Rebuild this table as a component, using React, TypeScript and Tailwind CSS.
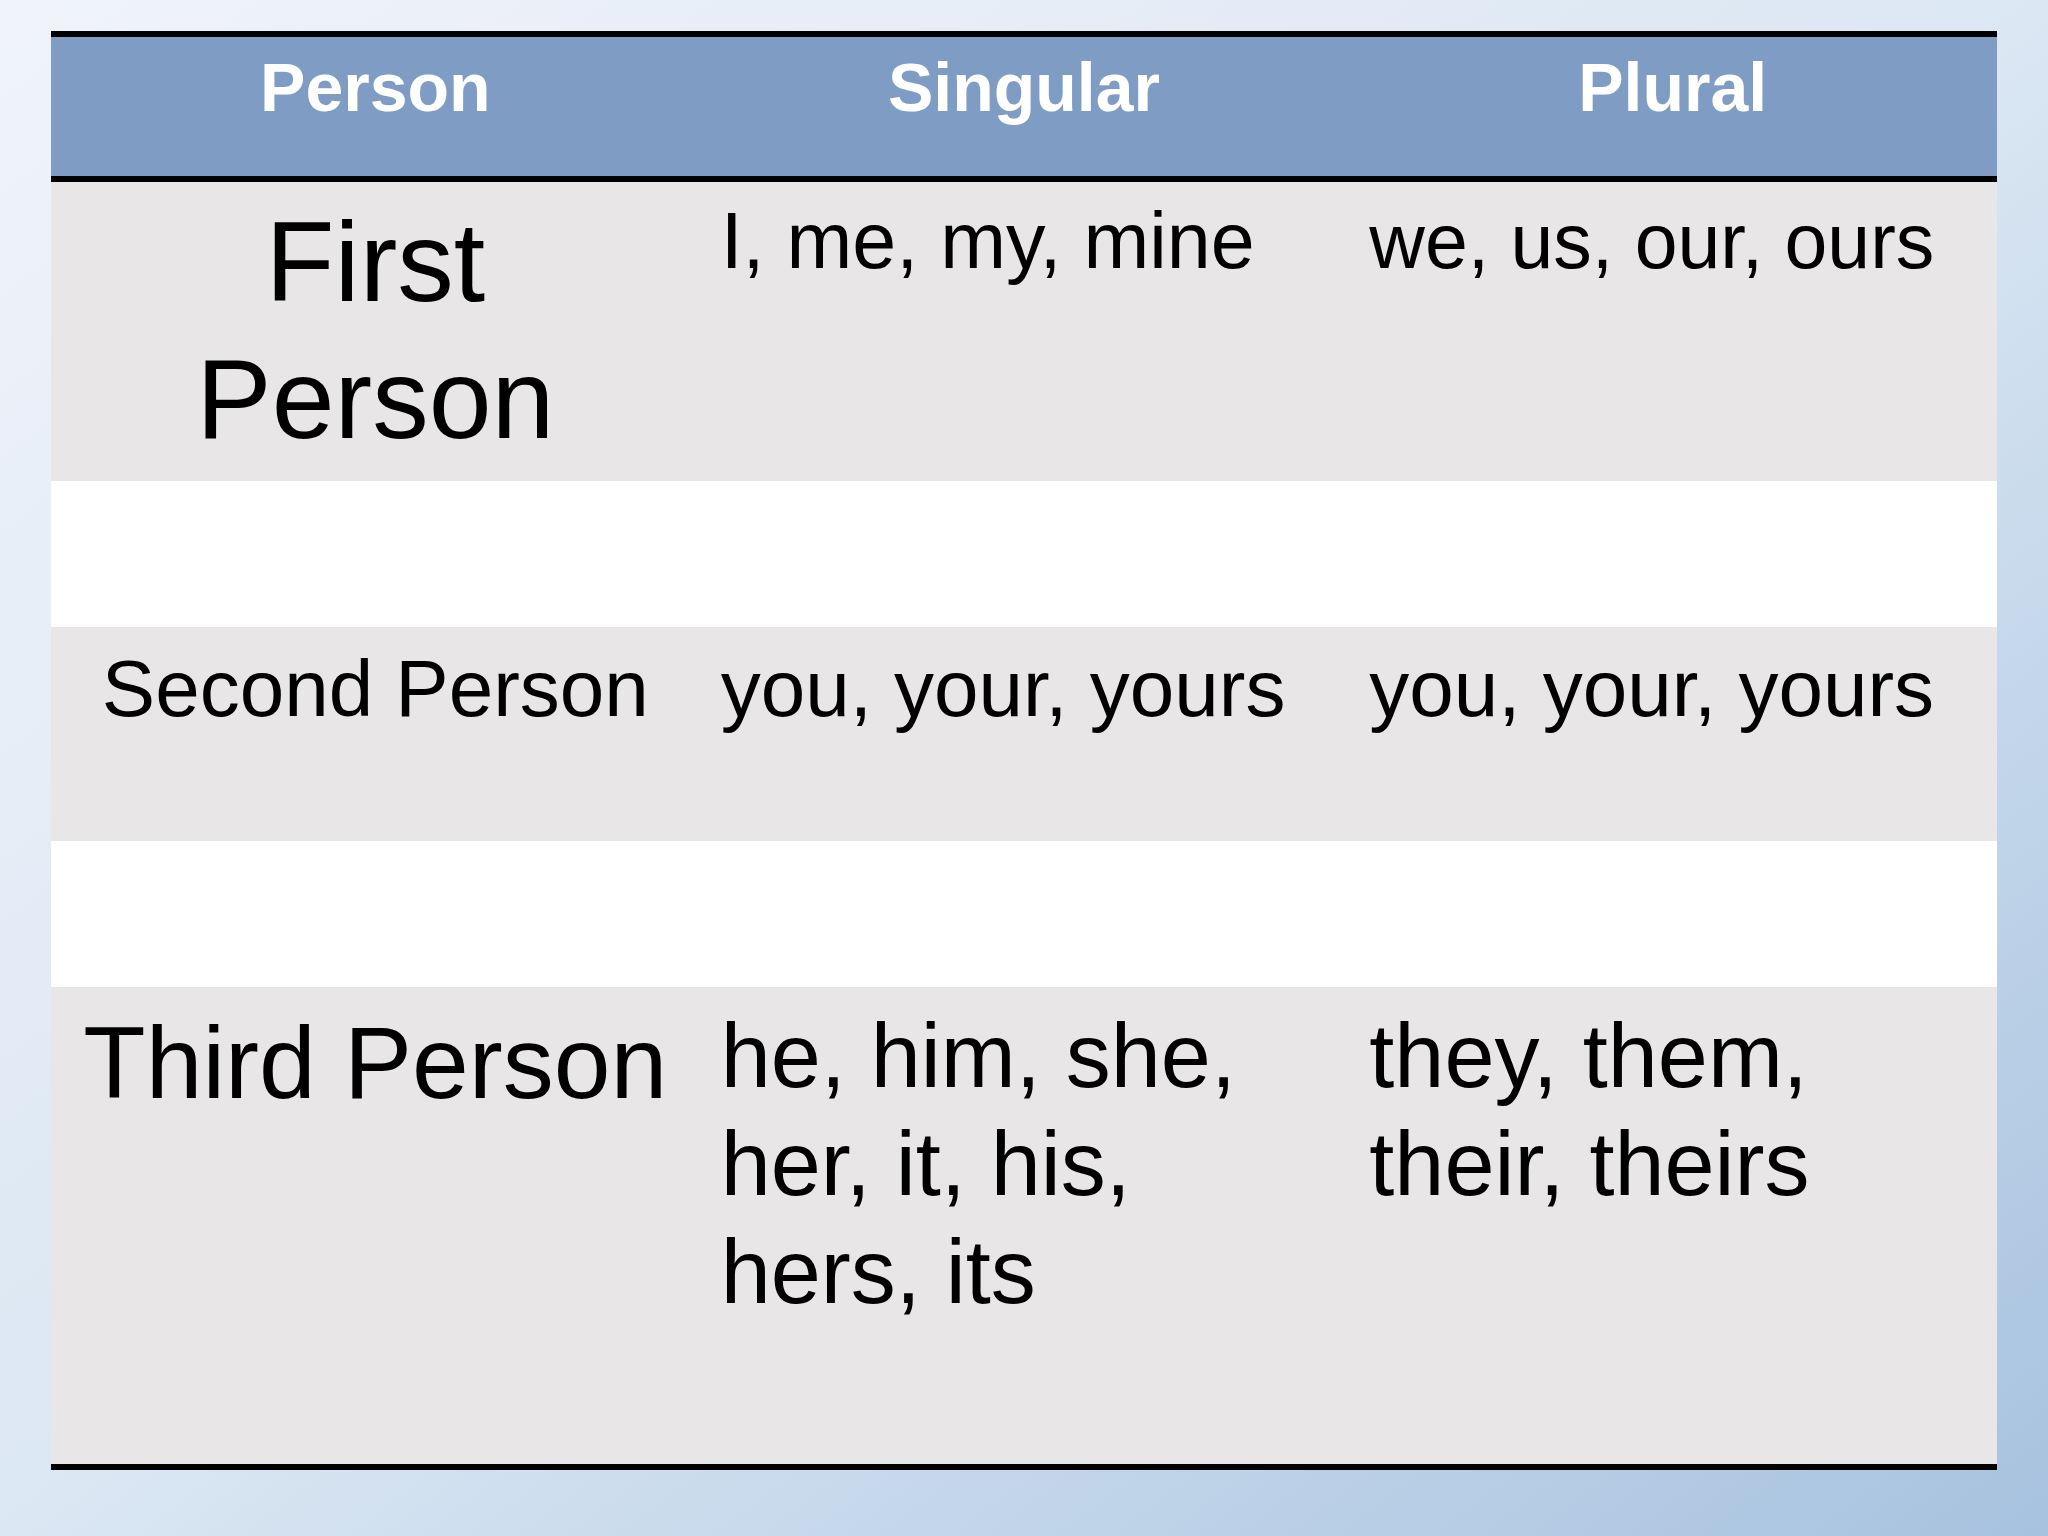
const FONT = "font-['Liberation_Sans',Arial,sans-serif]";

export default function App() {
  return (
    <div className={`w-[2048px] h-[1536px] bg-linear-to-br from-[#f0f3fb] via-[#dbe7f3] to-[#a7c2df] pt-[31px] pl-[51px] ${FONT} text-black`}>
      <div className="w-[1946px] flex flex-col">
        {/* header */}
        <div className="grid grid-cols-3 h-[151px] border-y-[6px] border-black bg-[#7f9dc4] text-white font-bold text-[68px] leading-[78px]">
          <div className="text-center pt-[11px]">Person</div>
          <div className="text-center pt-[11px]">Singular</div>
          <div className="text-center pt-[11px]">Plural</div>
        </div>

        {/* first person */}
        <div className="grid grid-cols-3 h-[299px] bg-[#e8e6e7]">
          <div className="text-center text-[113px] leading-[137px] pt-[12px]">
            First
            <br />
            Person
          </div>
          <div className="text-[79px] leading-[89px] pt-[14px] pl-[21px] pr-[12px]">I, me, my, mine</div>
          <div className="text-[77px] leading-[89px] pt-[15px] pl-[21px] pr-[12px]">we, us, our, ours</div>
        </div>

        <div className="h-[146px] bg-white" />

        {/* second person */}
        <div className="grid grid-cols-3 h-[214px] bg-[#e8e6e7] text-[80px] leading-[92px]">
          <div className="text-center pt-[16px]">Second Person</div>
          <div className="pt-[16px] pl-[21px] pr-[12px]">you, your, yours</div>
          <div className="pt-[16px] pl-[21px] pr-[12px]">you, your, yours</div>
        </div>

        <div className="h-[146px] bg-white" />

        {/* third person */}
        <div className="grid grid-cols-3 h-[483px] bg-[#e8e6e7] border-b-[6px] border-black">
          <div className="text-center text-[102px] leading-[117px] pt-[18px] whitespace-nowrap">Third Person</div>
          <div className="text-[90px] leading-[108px] pt-[15px] pl-[21px] pr-[12px]">he, him, she, her, it, his, hers, its</div>
          <div className="text-[90px] leading-[108px] pt-[15px] pl-[21px] pr-[12px]">they, them, their, theirs</div>
        </div>
      </div>
    </div>
  );
}
